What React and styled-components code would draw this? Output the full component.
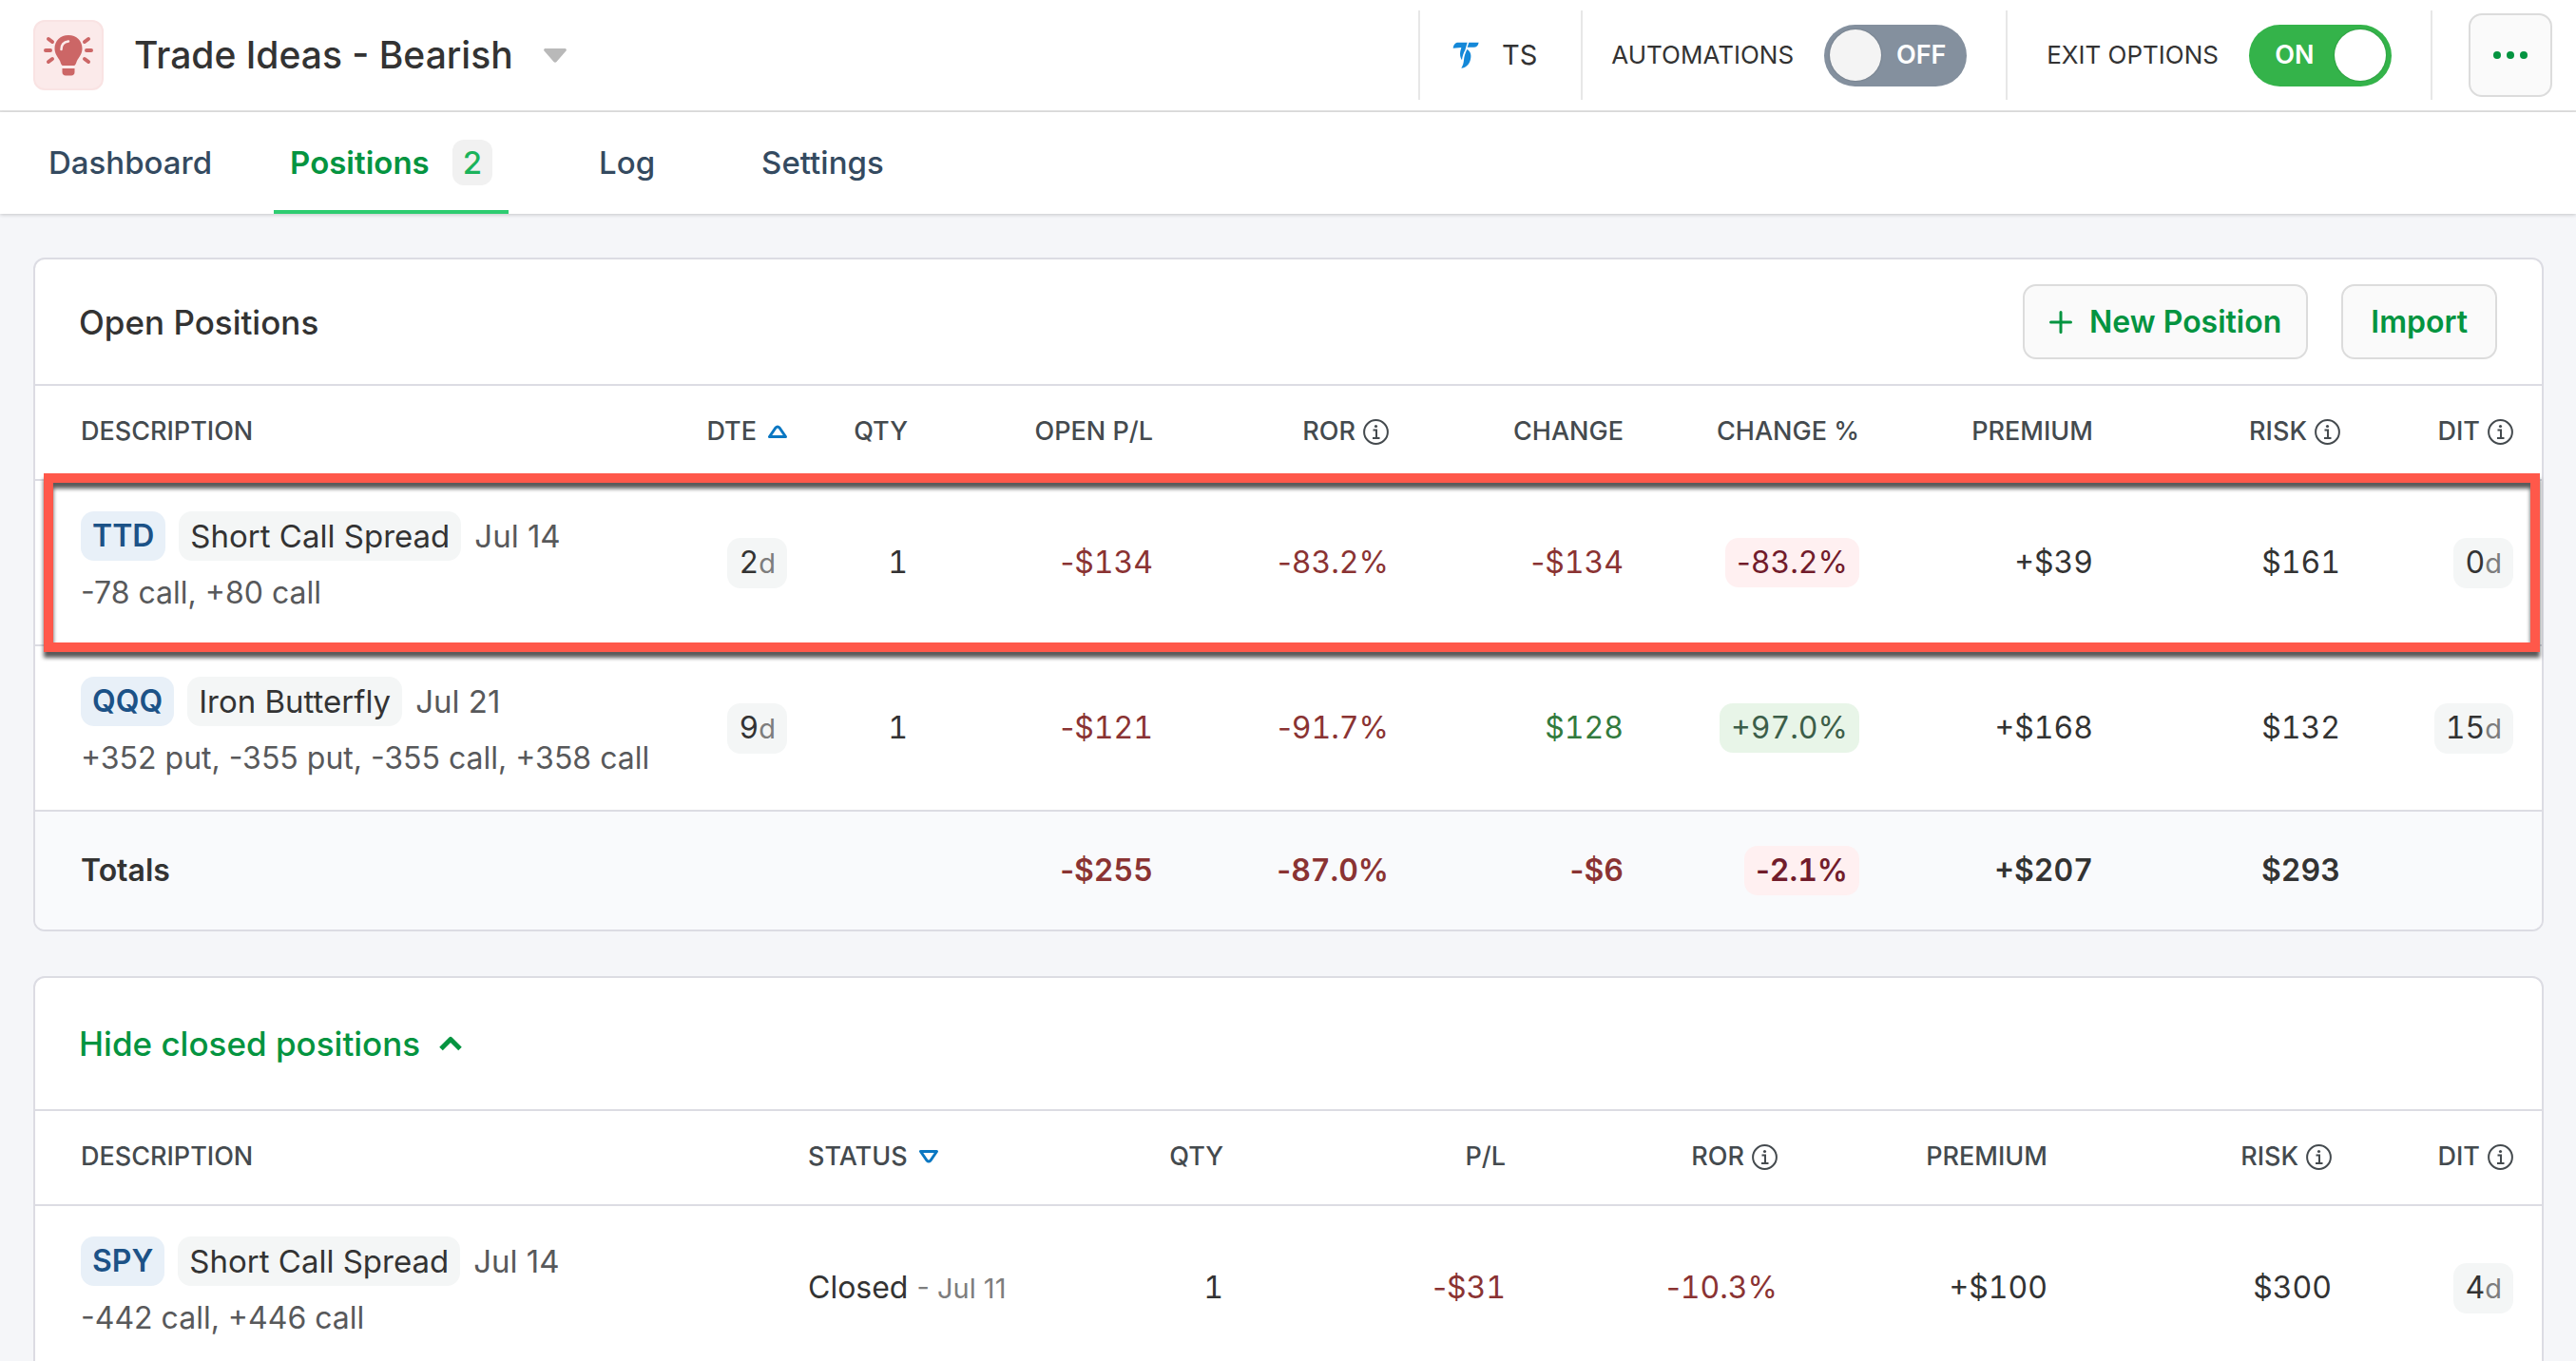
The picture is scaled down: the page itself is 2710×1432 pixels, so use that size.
import React, { useState } from "react";
import styled, { createGlobalStyle, css } from "styled-components";

const color = {
  text: "#333333",
  muted: "#58595b",
  faint: "#7d7d7d",
  heading: "#444a4e",
  navy: "#344a60",
  green: "#049440",
  line: "#dcdce3",
  page: "#f5f6f9",
};

const GlobalStyle = createGlobalStyle`
  *, *::before, *::after { box-sizing: border-box; }
  body {
    margin: 0;
    background: ${color.page};
    color: ${color.text};
    font-family: Inter, "Noto Sans", "Liberation Sans", sans-serif;
    font-size: 32px;
    line-height: 44px;
  }
  button {
    font: inherit;
    color: inherit;
    cursor: pointer;
  }
`;

/* ---------- shell ---------- */

const Shell = styled.div`
  display: flex;
  flex-direction: column;
  height: 100vh;
  overflow: hidden;
`;

const TopBar = styled.header`
  flex: none;
  display: flex;
  align-items: center;
  justify-content: space-between;
  height: 118px;
  padding: 0 25px 0 35px;
  background: #ffffff;
  border-bottom: 2px solid #e4e4e4;
`;

const BotSelector = styled.button`
  display: flex;
  align-items: center;
  gap: 32px;
  padding: 0;
  border: 0;
  background: none;
`;

const BotIcon = styled.span`
  display: grid;
  place-items: center;
  width: 74px;
  height: 74px;
  border: 2px solid #f9e3e3;
  border-radius: 12px;
  background: #fbeaea;
`;

const BotName = styled.span`
  font-size: 39px;
  font-weight: 500;
`;

const TopGroup = styled.div`
  display: flex;
  align-items: center;
`;

const TopItem = styled.div`
  display: flex;
  align-items: center;
  height: 94px;
  padding: 0 ${(p) => p.$end}px 0 ${(p) => p.$start}px;
  border-left: 2px solid #e7e7e7;
`;

const Broker = styled.span`
  display: flex;
  align-items: center;
  gap: 24px;
  font-size: 29px;
`;

const ToggleLabel = styled.label`
  display: flex;
  align-items: center;
  gap: 32px;
  font-size: 26px;
  text-transform: uppercase;
  cursor: pointer;
`;

const Track = styled.span`
  position: relative;
  display: flex;
  flex-direction: ${(p) => (p.$on ? "row-reverse" : "row")};
  align-items: center;
  width: 150px;
  height: 65px;
  padding: 0 6px;
  border-radius: 33px;
  background: ${(p) => (p.$on ? "#34b34a" : "#84909e")};
  color: #ffffff;
  font-size: 27px;
  font-weight: 600;
`;

const Knob = styled.span`
  width: 54px;
  height: 54px;
  border-radius: 50%;
  background: ${(p) => (p.$on ? "#ffffff" : "#f4f4f4")};
  box-shadow: 0 0 2px rgba(0, 0, 0, 0.25);
`;

const TrackText = styled.span`
  flex: 1;
  text-align: center;
`;

const SwitchInput = styled.input`
  position: absolute;
  inset: 0;
  margin: 0;
  opacity: 0;
  cursor: pointer;
`;

const outlined = css`
  border: 2px solid #dcdcdc;
  border-radius: 14px;
  background: #fafafa;
  color: ${color.green};
`;

const MoreButton = styled.button`
  ${outlined}
  display: grid;
  place-items: center;
  width: 88px;
  height: 88px;
  padding: 0;
`;

const Tabs = styled.nav`
  flex: none;
  display: flex;
  gap: 48px;
  height: 107px;
  padding: 0 34px;
  background: #ffffff;
  box-shadow: 0 1px 4px rgba(0, 0, 0, 0.2);
  z-index: 1;
`;

const Tab = styled.a`
  display: flex;
  align-items: center;
  gap: 24px;
  padding: 3px 17px 0;
  border-bottom: 4px solid ${(p) => (p.$active ? "#2ecc71" : "transparent")};
  margin-left: ${(p) => (p.$spaced ? 30 : 0)}px;
  color: ${(p) => (p.$active ? color.green : color.navy)};
  font-size: 33px;
  font-weight: ${(p) => (p.$active ? 600 : 500)};
  text-decoration: none;
`;

const Count = styled.span`
  padding: 2px 11px;
  border-radius: 12px;
  background: #f1f1f1;
  color: #1bb35b;
  font-weight: 500;
`;

const Main = styled.main`
  flex: 1;
  min-height: 0;
  display: flex;
  flex-direction: column;
  gap: 47px;
  padding: 46px 34px 46px 35px;
  overflow-y: auto;
  scrollbar-width: none;
`;

/* ---------- cards and tables ---------- */

const Card = styled.section`
  flex: none;
  border: 2px solid ${color.line};
  border-radius: 12px;
  background: #ffffff;
`;

const CardHead = styled.div`
  display: flex;
  align-items: center;
  justify-content: space-between;
  height: ${(p) => (p.$tall ? 138 : 131)}px;
  padding: 0 47px 0 46px;
`;

const CardTitle = styled.h2`
  margin: 0;
  font-size: 35px;
  font-weight: 500;
`;

const Actions = styled.div`
  display: flex;
  gap: 35px;
`;

const ActionButton = styled.button`
  ${outlined}
  display: flex;
  align-items: center;
  gap: 18px;
  height: 79px;
  padding: 0 ${(p) => (p.$withIcon ? 26 : 29)}px;
  font-weight: 600;
`;

const Disclosure = styled.button`
  display: flex;
  align-items: center;
  gap: 20px;
  padding: 0;
  border: 0;
  background: none;
  color: ${color.green};
  font-size: 35px;
  font-weight: 500;
`;

const Table = styled.table`
  width: 100%;
  table-layout: fixed;
  border-collapse: separate;
  border-spacing: 0;
`;

const Col = styled.col`
  width: ${(p) => p.$share}%;
`;

const Th = styled.th`
  height: 102px;
  padding: 0 0 2px;
  border-top: 2px solid ${color.line};
  border-bottom: 2px solid ${color.line};
  color: ${color.heading};
  font-size: 27px;
  font-weight: 500;
  text-align: ${(p) => (p.$left ? "left" : "right")};
  text-transform: uppercase;
  white-space: nowrap;
  &:first-child {
    padding-left: 48px;
  }
  &:last-child {
    padding-right: 30px;
  }
`;

const HeadLabel = styled.span`
  display: inline-flex;
  align-items: center;
  gap: 8px;
`;

const SortButton = styled.button`
  display: inline-flex;
  align-items: center;
  gap: 12px;
  padding: 0;
  border: 0;
  background: none;
  text-transform: inherit;
`;

const Td = styled.td`
  padding: 32px 0;
  border-bottom: 2px solid ${color.line};
  text-align: ${(p) => (p.$left ? "left" : "right")};
  vertical-align: middle;
  white-space: nowrap;
  font-variant-numeric: ${(p) => (p.$left ? "normal" : "tabular-nums")};
  color: ${(p) => (p.$tone === "loss" ? "#8a3333" : p.$tone === "gain" ? "#337a3e" : "inherit")};
  &:first-child {
    padding-left: 48px;
  }
  &:last-child {
    padding-right: 30px;
  }
`;

const Sign = styled.span`
  font-variant-numeric: normal;
`;

const Row = styled.tr`
  position: relative;
  ${(p) =>
    p.$highlight &&
    css`
      &::after {
        content: "";
        position: absolute;
        inset: -8px 2px -6px 9px;
        border: 10px solid #ff584a;
        filter: drop-shadow(0 6px 2px rgba(0, 0, 0, 0.65));
        pointer-events: none;
      }
    `}
`;

const TotalCell = styled(Td)`
  height: 124px;
  padding-top: 0;
  padding-bottom: 0;
  border-bottom: 0;
  background: #f9fafc;
  font-weight: 600;
  &:first-child {
    border-bottom-left-radius: 10px;
  }
  &:last-child {
    border-bottom-right-radius: 10px;
  }
`;

const Headline = styled.div`
  display: flex;
  align-items: center;
  gap: 14px;
  margin-bottom: 12px;
  font-size: 33px;
`;

const pillTones = {
  symbol: css`
    background: #e8f0f8;
    color: #1c5287;
    font-size: 32px;
    font-weight: 600;
  `,
  plain: css`
    background: #f4f6f6;
  `,
  loss: css`
    background: #fff0f1;
    color: #711c2b;
  `,
  gain: css`
    background: #e8f5e8;
    color: #3c5e49;
  `,
};

const Pill = styled.span`
  display: inline-block;
  padding: 4px 12px;
  border-radius: 14px;
  ${(p) => pillTones[p.$tone]}
`;

const Muted = styled.span`
  color: ${color.muted};
`;

const Legs = styled.div`
  color: ${color.muted};
`;

const Small = styled.small`
  color: ${color.faint};
  font-size: 29px;
`;

/* ---------- icons ---------- */

const BulbIcon = () => (
  <svg width="52" height="44" viewBox="0 0 52 44" fill="none" aria-hidden="true">
    <path
      d="M26 1C17.500 1 11.500 7 11.500 15c0 6 3.500 9 5.500 13 1 2.200 1.300 5 3.500 5h11c2.200 0 2.500-2.800 3.500-5 2-4 5.500-7 5.500-13C40.500 7 34.500 1 26 1Z"
      fill="#cc6666"
    />
    <path d="M18.500 16c0-5 3-8 7.500-8.500" stroke="#fbeaea" strokeWidth="2.500" strokeLinecap="round" />
    <path d="M19.500 36h13v4c0 2-1.500 3.500-3.500 3.500h-6c-2 0-3.500-1.500-3.500-3.500Z" fill="#cc6666" />
    <path
      d="M2 17h5M45 17h5M5 5l4 3M47 5l-4 3M5 29l4-3M47 29l-4-3"
      stroke="#cc6666"
      strokeWidth="4"
      strokeLinecap="round"
    />
  </svg>
);

const CaretIcon = () => (
  <svg width="24" height="15" viewBox="0 0 24 15" aria-hidden="true">
    <path d="M2 0h20c1.800 0 2.500 1.500 1.300 2.800L13.500 14c-.9 1-2.100 1-3 0L.7 2.800C-.5 1.500.2 0 2 0Z" fill="#b9b9b9" />
  </svg>
);

const BrokerLogo = () => (
  <svg width="28" height="28" viewBox="58 40 84 84" fill="#1488d8" aria-hidden="true">
    <path d="M60 60C62 49 66 42 76 42h29l-7 24c-5 9-9 20-10 32-6-9-7-19-5-29l3-11Z" />
    <path d="M110 42h31c-2 10-7 15-16 15h-20Z" />
    <path d="M104 64c12 6 15 20 10 35-5 14-14 22-28 24 5-8 7-15 8-25 1-12 4-22 10-34Z" />
  </svg>
);

const DotsIcon = () => (
  <svg width="36" height="8" viewBox="0 0 36 8" fill={color.green} aria-hidden="true">
    <circle cx="4" cy="4" r="4" />
    <circle cx="18" cy="4" r="4" />
    <circle cx="32" cy="4" r="4" />
  </svg>
);

const PlusIcon = () => (
  <svg width="24" height="24" viewBox="0 0 24 24" stroke={color.green} strokeWidth="3" strokeLinecap="round" aria-hidden="true">
    <path d="M12 1.500v21M1.500 12h21" />
  </svg>
);

const ChevronIcon = () => (
  <svg width="24" height="16" viewBox="0 0 24 16" fill="none" stroke={color.green} strokeWidth="5" aria-hidden="true">
    <path d="M2 13.500 12 3.500l10 10" strokeLinejoin="round" />
  </svg>
);

const SortIcon = ({ down }) => (
  <svg width="20" height="14" viewBox="0 0 20 14" fill="none" stroke="#0a77c2" strokeWidth="3" strokeLinejoin="round" aria-hidden="true">
    <path d={down ? "M1.500 1.500h17l-6.500 9.500q-2 2-4 0Z" : "M1.500 12.500h17L12 3q-2-2-4 0Z"} />
  </svg>
);

const InfoIcon = () => (
  <svg width="27" height="27" viewBox="0 0 27 27" fill="none" stroke={color.heading} strokeWidth="2" role="img" aria-label="More information">
    <circle cx="13.500" cy="13.500" r="12.400" />
    <path d="M10.500 11.500h3.500v8.500M10 20h7.500" />
    <circle cx="13.500" cy="7.500" r="1.600" fill={color.heading} stroke="none" />
  </svg>
);

/* ---------- data ---------- */

const openColumns = [
  { label: "Description", size: 663, left: true },
  { label: "DTE", size: 128, sort: "up" },
  { label: "Qty", size: 127 },
  { label: "Open P/L", size: 258 },
  { label: "ROR", size: 248, info: true },
  { label: "Change", size: 247 },
  { label: "Change %", size: 248 },
  { label: "Premium", size: 246 },
  { label: "Risk", size: 260, info: true },
  { label: "DIT", size: 212, info: true },
];

const closedColumns = [
  { label: "Description", size: 813, left: true },
  { label: "Status", size: 250, left: true, sort: "down" },
  { label: "Qty", size: 187 },
  { label: "P/L", size: 297 },
  { label: "ROR", size: 286, info: true },
  { label: "Premium", size: 284 },
  { label: "Risk", size: 299, info: true },
  { label: "DIT", size: 221, info: true },
];

const openPositions = [
  {
    symbol: "TTD", strategy: "Short Call Spread", expires: "Jul 14", legs: "-78 call, +80 call",
    dte: 2, qty: 1, pl: "-$134", ror: "-83.2%", change: "-$134", changePct: "-83.2%",
    premium: "+$39", risk: "$161", dit: 0, highlight: true,
  },
  {
    symbol: "QQQ", strategy: "Iron Butterfly", expires: "Jul 21", legs: "+352 put, -355 put, -355 call, +358 call",
    dte: 9, qty: 1, pl: "-$121", ror: "-91.7%", change: "$128", changePct: "+97.0%",
    premium: "+$168", risk: "$132", dit: 15,
  },
];

const totals = { pl: "-$255", ror: "-87.0%", change: "-$6", changePct: "-2.1%", premium: "+$207", risk: "$293" };

const closedPositions = [
  {
    symbol: "SPY", strategy: "Short Call Spread", expires: "Jul 14", legs: "-442 call, +446 call",
    closed: "Jul 11", qty: 1, pl: "-$31", ror: "-10.3%", premium: "+$100", risk: "$300", dit: 4,
  },
];

const tone = (value) => (value.startsWith("-") ? "loss" : "gain");

/* ---------- parts ---------- */

function Toggle({ label, initial }) {
  const [on, setOn] = useState(initial);
  return (
    <ToggleLabel>
      {label}
      <Track $on={on}>
        <Knob $on={on} />
        <TrackText>{on ? "On" : "Off"}</TrackText>
        <SwitchInput type="checkbox" role="switch" aria-label={label} checked={on} onChange={() => setOn(!on)} />
      </Track>
    </ToggleLabel>
  );
}

function Columns({ columns }) {
  const total = columns.reduce((sum, c) => sum + c.size, 0);
  return (
    <>
      <colgroup>
        {columns.map((c) => (
          <Col key={c.label} $share={(100 * c.size) / total} />
        ))}
      </colgroup>
      <thead>
        <tr>
          {columns.map((c) => (
            <Th key={c.label} scope="col" $left={c.left}>
              {c.sort ? (
                <SortButton type="button">
                  {c.label}
                  <SortIcon down={c.sort === "down"} />
                </SortButton>
              ) : (
                <HeadLabel>
                  {c.label}
                  {c.info && <InfoIcon />}
                </HeadLabel>
              )}
            </Th>
          ))}
        </tr>
      </thead>
    </>
  );
}

/* Digits align in columns; a leading minus keeps its narrow form. */
const Amount = ({ value }) =>
  value.startsWith("-") ? (
    <>
      <Sign>-</Sign>
      {value.slice(1)}
    </>
  ) : (
    value
  );

const Description = ({ position }) => (
  <Td $left>
    <Headline>
      <Pill $tone="symbol">{position.symbol}</Pill>
      <Pill $tone="plain">{position.strategy}</Pill>
      <Muted>{position.expires}</Muted>
    </Headline>
    <Legs>{position.legs}</Legs>
  </Td>
);

const Days = ({ count }) => (
  <Pill $tone="plain">
    {count}
    <Small>d</Small>
  </Pill>
);

export default function App() {
  return (
    <Shell>
      <GlobalStyle />
      <TopBar>
        <BotSelector type="button">
          <BotIcon>
            <BulbIcon />
          </BotIcon>
          <BotName>Trade Ideas - Bearish</BotName>
          <CaretIcon />
        </BotSelector>
        <TopGroup>
          <TopItem $start={34} $end={46}>
            <Broker>
              <BrokerLogo />
              TS
            </Broker>
          </TopItem>
          <TopItem $start={30} $end={41}>
            <Toggle label="Automations" initial={false} />
          </TopItem>
          <TopItem $start={41} $end={41}>
            <Toggle label="Exit options" initial />
          </TopItem>
          <TopItem $start={38} $end={0}>
            <MoreButton type="button" aria-label="More actions">
              <DotsIcon />
            </MoreButton>
          </TopItem>
        </TopGroup>
      </TopBar>

      <Tabs>
        <Tab href="#dashboard">Dashboard</Tab>
        <Tab href="#positions" $active aria-current="page">
          Positions <Count>2</Count>
        </Tab>
        <Tab href="#log" $spaced>Log</Tab>
        <Tab href="#settings" $spaced>Settings</Tab>
      </Tabs>

      <Main>
        <Card>
          <CardHead>
            <CardTitle>Open Positions</CardTitle>
            <Actions>
              <ActionButton type="button" $withIcon>
                <PlusIcon />
                New Position
              </ActionButton>
              <ActionButton type="button">Import</ActionButton>
            </Actions>
          </CardHead>
          <Table>
            <Columns columns={openColumns} />
            <tbody>
              {openPositions.map((p) => (
                <Row key={p.symbol} $highlight={p.highlight}>
                  <Description position={p} />
                  <Td><Days count={p.dte} /></Td>
                  <Td>{p.qty}</Td>
                  <Td $tone={tone(p.pl)}><Amount value={p.pl} /></Td>
                  <Td $tone={tone(p.ror)}><Amount value={p.ror} /></Td>
                  <Td $tone={tone(p.change)}><Amount value={p.change} /></Td>
                  <Td>
                    <Pill $tone={tone(p.changePct)}><Amount value={p.changePct} /></Pill>
                  </Td>
                  <Td>{p.premium}</Td>
                  <Td>{p.risk}</Td>
                  <Td><Days count={p.dit} /></Td>
                </Row>
              ))}
            </tbody>
            <tfoot>
              <tr>
                <TotalCell $left colSpan={3}>Totals</TotalCell>
                <TotalCell $tone={tone(totals.pl)}><Amount value={totals.pl} /></TotalCell>
                <TotalCell $tone={tone(totals.ror)}><Amount value={totals.ror} /></TotalCell>
                <TotalCell $tone={tone(totals.change)}><Amount value={totals.change} /></TotalCell>
                <TotalCell>
                  <Pill $tone={tone(totals.changePct)}><Amount value={totals.changePct} /></Pill>
                </TotalCell>
                <TotalCell>{totals.premium}</TotalCell>
                <TotalCell>{totals.risk}</TotalCell>
                <TotalCell />
              </tr>
            </tfoot>
          </Table>
        </Card>

        <Card>
          <CardHead $tall>
            <Disclosure type="button" aria-expanded="true">
              Hide closed positions
              <ChevronIcon />
            </Disclosure>
          </CardHead>
          <Table>
            <Columns columns={closedColumns} />
            <tbody>
              {closedPositions.map((p) => (
                <Row key={p.symbol}>
                  <Description position={p} />
                  <Td $left>
                    Closed <Small>- {p.closed}</Small>
                  </Td>
                  <Td>{p.qty}</Td>
                  <Td $tone={tone(p.pl)}><Amount value={p.pl} /></Td>
                  <Td $tone={tone(p.ror)}><Amount value={p.ror} /></Td>
                  <Td>{p.premium}</Td>
                  <Td>{p.risk}</Td>
                  <Td><Days count={p.dit} /></Td>
                </Row>
              ))}
            </tbody>
          </Table>
        </Card>
      </Main>
    </Shell>
  );
}
